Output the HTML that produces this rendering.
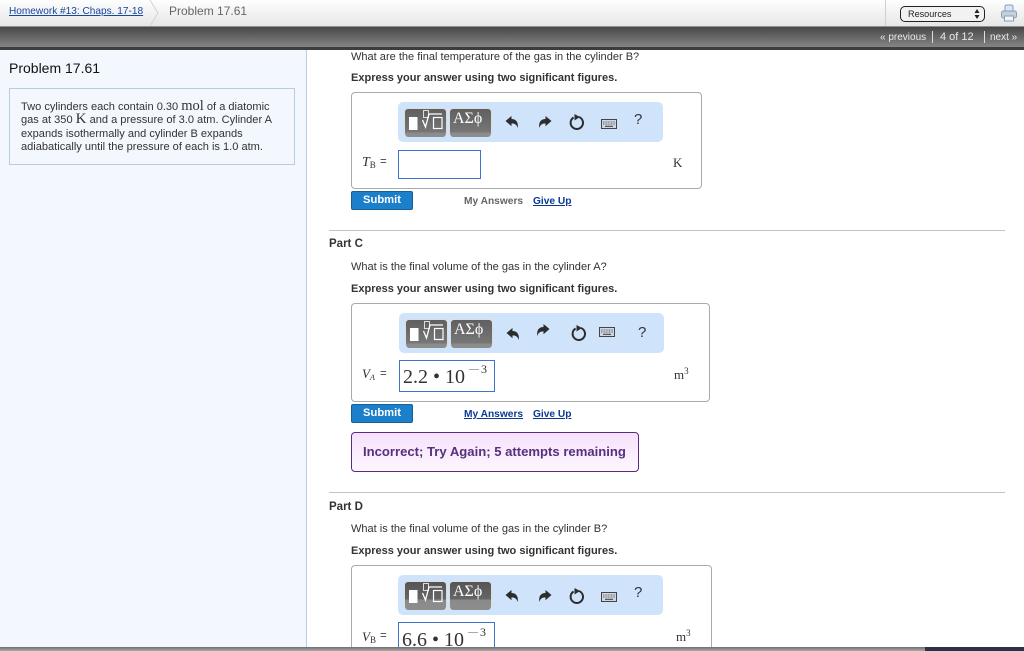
<!DOCTYPE html>
<html><head><meta charset="utf-8"><style>
html,body{margin:0;padding:0;width:1024px;height:651px;overflow:hidden;background:#fff}
body{position:relative;font-family:"Liberation Sans",sans-serif;color:#333}
.a{position:absolute;white-space:nowrap}
.t{font-size:11.040px;line-height:14px;color:#333}
.b{font-size:11.020px;line-height:14px;font-weight:bold;color:#333}
.l{font-size:10.200px;line-height:14px;font-weight:bold;color:#333}
.h{font-size:11.500px;line-height:14px;font-weight:bold;color:#333}
a{color:#0b3a94;text-decoration:underline}
.box{position:absolute;border:1px solid #aaa;border-radius:4px;background:#fff;box-sizing:border-box}
.tb{position:absolute;width:265px;height:40px;background:#cfe4fb;border-radius:5px}
.btn{position:absolute;top:6px;width:43px;height:29px;box-sizing:border-box;border-radius:4px;border:1px solid #ddd;border-bottom:0;background:linear-gradient(#5f5f5f 0,#777 83%,#8a8a8a 84%,#8d8d8d 100%);color:#fff;overflow:hidden}
.low{background:linear-gradient(#555 0,#666 62%,#8a8a8a 63%,#8d8d8d 100%)}
.sym{position:absolute;left:3px;top:1px;font-family:"Liberation Serif",serif;font-size:16px;line-height:18px}
.q{position:absolute;font-size:15px;line-height:16px;color:#333}
.sub{position:absolute;width:62px;height:19px;box-sizing:border-box;background:#1b7fc9;border:1px solid #14609c;border-radius:2px;color:#fff;font:bold 11.200px/17px "Liberation Sans",sans-serif;text-align:center}
.s{font-family:"Liberation Serif",serif}
.hr{position:absolute;left:329px;width:676px;height:1px;background:#c4c4c4}
.ans{position:absolute;box-sizing:border-box;border:1px solid #3f73c9;background:#fff;overflow:hidden}
.eq{font-family:"Liberation Sans",sans-serif;font-size:11.500px;line-height:15px;color:#444}
.dash{position:absolute;width:10px;height:1px;background:#aaa}
</style></head><body>

<svg width="0" height="0" style="position:absolute">
<defs>
<symbol id="undo" viewBox="0 0 14 14"><path d="M.5 6 L6.500 1 V4 C10.800 4 13.500 6.800 12.800 13 C11.600 9.800 10 8.400 6.500 8.400 V11.200 Z" fill="#2d2d2d"/></symbol>
<symbol id="redo" viewBox="0 0 14 14"><path d="M13.500 6 L7.500 1 V4 C3.200 4 .5 6.800 1.200 13 C2.400 9.800 4 8.400 7.500 8.400 V11.200 Z" fill="#2d2d2d"/></symbol>
<symbol id="reset" viewBox="0 0 16 16"><path d="M10 3 A6.200 6.200 0 1 1 4.600 3.500" fill="none" stroke="#2d2d2d" stroke-width="2"/><path d="M5.500 0 L11 3 L5.500 6.500 Z" fill="#2d2d2d"/></symbol>
<symbol id="kbd" viewBox="0 0 16 10"><rect x=".5" y=".5" width="15" height="9" fill="#cfd8e2" stroke="#444"/><path d="M2 3H14M2 5H14" stroke="#666" stroke-width="1" stroke-dasharray="1 .6"/><path d="M4 7.300H12" stroke="#444" stroke-width="1.100"/></symbol>
<symbol id="tpl" viewBox="0 0 42 29"><rect x="4" y="8" width="8.500" height="13" fill="#fff"/><rect x="18.500" y="1.500" width="5" height="7" fill="none" stroke="#ddd" stroke-width="1"/><path d="M17.500 11 L20.500 18 L24 5 H37" fill="none" stroke="#fff" stroke-width="1.300"/><rect x="28.500" y="8.500" width="8.500" height="11" fill="none" stroke="#fff" stroke-width="1.200"/></symbol>
</defs></svg>

<!-- top bar -->
<div class="a" style="left:0;top:0;width:1024px;height:26px;background:linear-gradient(#fefefe,#e6e6e6);border-bottom:1px solid #8f8f8f"></div>
<a class="a" style="left:9px;top:5px;font-size:10.100px;line-height:13px;color:#1546a0">Homework #13: Chaps. 17-18</a>
<svg class="a" style="left:149px;top:0" width="12" height="26"><path d="M1 0 L9 13 L1 26" fill="none" stroke="#d4d4d4"/></svg>
<div class="a" style="left:169px;top:4px;font-size:12px;line-height:15px;color:#666">Problem 17.61</div>
<div class="a" style="left:885px;top:0;width:1px;height:26px;background:#d0d0d0"></div>
<div class="a" style="left:900px;top:6px;width:85px;height:16px;box-sizing:border-box;border:1px solid #222;border-radius:5px;background:#f2f2f2;font-size:9.100px;line-height:14px;padding-left:7px;color:#222">Resources</div>
<svg class="a" style="left:974px;top:9px" width="6" height="10"><path d="M3 0L5.500 4H.5ZM3 10L5.500 6H.5Z" fill="#222"/></svg>
<svg class="a" style="left:1001px;top:4px" width="16" height="18"><path d="M4 7V2.500Q4 1 5.500 1H10.500Q12 1 12 2.500V7" fill="#dbe6f2" stroke="#7fa3c9"/><rect x=".5" y="7" width="15" height="7" rx="2" fill="#c5d0dc" stroke="#8a9db3"/><rect x="3.500" y="12" width="9" height="5" fill="#f5f5f5" stroke="#8a9db3"/></svg>

<!-- dark bar -->
<div class="a" style="left:0;top:27px;width:1024px;height:20px;background:linear-gradient(#474747,#858585)"></div>
<div class="a" style="left:0;top:47px;width:1024px;height:3px;background:#3d3d3d"></div>
<div class="a" style="left:880px;top:31px;font-size:10px;line-height:13px;color:#e8e8e8">« previous</div>
<div class="a" style="left:932px;top:31px;width:1px;height:12px;background:#ddd"></div>
<div class="a" style="left:940px;top:30px;font-size:11px;line-height:14px;color:#e8e8e8">4 of 12</div>
<div class="a" style="left:984px;top:31px;width:1px;height:12px;background:#ddd"></div>
<div class="a" style="left:990px;top:31px;font-size:10px;line-height:13px;color:#e8e8e8">next »</div>

<!-- left panel -->
<div class="a" style="left:0;top:50px;width:306px;height:597px;background:#f3f8fe;border-right:1px solid #b8cde0"></div>
<div class="a" style="left:9px;top:60px;font-size:14px;line-height:17px;color:#111">Problem 17.61</div>
<div class="a" style="left:9px;top:88px;width:286px;height:77px;box-sizing:border-box;border:1px solid #b6cee0"></div>
<div class="a" style="left:21px;top:101px;font-size:11.060px;line-height:13.300px;color:#333">Two cylinders each contain 0.30 <span class="s" style="font-size:14.500px;line-height:0">mol</span> of a diatomic<br>gas at 350 <span class="s" style="font-size:15px;line-height:0">K</span> and a pressure of 3.0 atm. Cylinder A<br>expands isothermally and cylinder B expands<br>adiabatically until the pressure of each is 1.0 atm.</div>

<!-- Part B remainder -->
<div class="a t" style="left:351px;top:50px">What are the final temperature of the gas in the cylinder B?</div>
<div class="a b" style="left:351px;top:71px">Express your answer using two significant figures.</div>

<div class="box" style="left:351px;top:92px;width:351px;height:97px"></div>
<div class="tb" style="left:398px;top:102px">
 <div class="btn" style="left:6px"><svg style="position:absolute;left:0;top:0" width="42" height="29"><use href="#tpl"/></svg></div>
 <div class="btn" style="left:51px"><div class="sym">ΑΣϕ</div></div>
 <svg class="a" style="left:107px;top:13px" width="14" height="14"><use href="#undo"/></svg>
 <svg class="a" style="left:140px;top:13px" width="14" height="14"><use href="#redo"/></svg>
 <svg class="a" style="left:171px;top:12px" width="16" height="16"><use href="#reset"/></svg>
 <svg class="a" style="left:203px;top:17px" width="16" height="10"><use href="#kbd"/></svg>
 <div class="q" style="left:236px;top:10px">?</div>
</div>
<div class="a s" style="left:362px;top:155px;font-size:14px;line-height:15px;color:#333"><i>T</i><span style="font-size:9px;position:relative;top:2px">B</span></div>
<div class="a eq" style="left:380px;top:155px">=</div>
<div class="ans" style="left:398px;top:150px;width:83px;height:29px"></div>
<div class="a s" style="left:673px;top:155px;font-size:13px;line-height:15px;color:#333">K</div>
<div class="sub" style="left:351px;top:191px">Submit</div>
<div class="a l" style="left:464px;top:195px;color:#666">My Answers</div>
<a class="a l" style="left:533px;top:195px;color:#0b3a94">Give Up</a>

<!-- Part C -->
<div class="hr" style="top:230px"></div>
<div class="a h" style="left:329px;top:237px">Part C</div>
<div class="a t" style="left:351px;top:260px">What is the final volume of the gas in the cylinder A?</div>
<div class="a b" style="left:351px;top:282px">Express your answer using two significant figures.</div>

<div class="box" style="left:351px;top:303px;width:359px;height:99px"></div>
<div class="tb" style="left:399px;top:313px">
 <div class="btn" style="left:6px"><svg style="position:absolute;left:0;top:0" width="42" height="29"><use href="#tpl"/></svg></div>
 <div class="btn" style="left:51px"><div class="sym">ΑΣϕ</div></div>
 <svg class="a" style="left:107px;top:14px" width="14" height="14"><use href="#undo"/></svg>
 <svg class="a" style="left:137px;top:10px" width="14" height="14"><use href="#redo"/></svg>
 <svg class="a" style="left:172px;top:12px" width="16" height="16"><use href="#reset"/></svg>
 <svg class="a" style="left:200px;top:14px" width="16" height="10"><use href="#kbd"/></svg>
 <div class="q" style="left:239px;top:12px">?</div>
</div>
<div class="a s" style="left:362px;top:366px;font-size:13px;line-height:15px;color:#333"><i>V</i><span style="font-size:8px;position:relative;top:2px"><i>A</i></span></div>
<div class="a eq" style="left:380px;top:367px">=</div>
<div class="ans" style="left:399px;top:360px;width:96px;height:32px"></div>
<div class="a s" style="left:403px;top:366px;font-size:20px;line-height:22px;color:#333">2.2 • 10</div>
<div class="dash" style="left:469px;top:369px"></div>
<div class="a s" style="left:481px;top:362px;font-size:12px;line-height:14px;color:#333">3</div>
<div class="a s" style="left:674px;top:367px;font-size:13px;line-height:15px;color:#333">m<span style="font-size:9px;position:relative;top:-5px">3</span></div>
<div class="sub" style="left:351px;top:404px">Submit</div>
<a class="a l" style="left:464px;top:408px;color:#0b3a94">My Answers</a>
<a class="a l" style="left:533px;top:408px;color:#0b3a94">Give Up</a>

<div class="a" style="left:351px;top:432px;width:288px;height:40px;box-sizing:border-box;border:1px solid #5d2a82;border-radius:4px;background:linear-gradient(#f6e2fb,#fdf6ff);color:#55307c;font:bold 13.100px/37px 'Liberation Sans',sans-serif;padding-left:11px">Incorrect; Try Again; 5 attempts remaining</div>

<!-- Part D -->
<div class="hr" style="top:492px"></div>
<div class="a h" style="left:329px;top:500px">Part D</div>
<div class="a t" style="left:351px;top:522px">What is the final volume of the gas in the cylinder B?</div>
<div class="a b" style="left:351px;top:544px">Express your answer using two significant figures.</div>

<div class="box" style="left:351px;top:565px;width:361px;height:110px"></div>
<div class="tb" style="left:398px;top:575px">
 <div class="btn low" style="left:6px;top:6px"><svg style="position:absolute;left:0;top:0" width="42" height="29"><use href="#tpl"/></svg></div>
 <div class="btn low" style="left:51px;top:6px"><div class="sym">ΑΣϕ</div></div>
 <svg class="a" style="left:107px;top:14px" width="14" height="14"><use href="#undo"/></svg>
 <svg class="a" style="left:140px;top:14px" width="14" height="14"><use href="#redo"/></svg>
 <svg class="a" style="left:171px;top:13px" width="16" height="16"><use href="#reset"/></svg>
 <svg class="a" style="left:203px;top:17px" width="16" height="10"><use href="#kbd"/></svg>
 <div class="q" style="left:236px;top:10px">?</div>
</div>
<div class="a s" style="left:362px;top:629px;font-size:13px;line-height:15px;color:#333"><i>V</i><span style="font-size:9px;position:relative;top:2px">B</span></div>
<div class="a eq" style="left:380px;top:629px">=</div>
<div class="ans" style="left:398px;top:622px;width:97px;height:40px"></div>
<div class="a s" style="left:402px;top:629px;font-size:20px;line-height:22px;color:#333">6.6 • 10</div>
<div class="dash" style="left:468px;top:632px"></div>
<div class="a s" style="left:480px;top:625px;font-size:12px;line-height:14px;color:#333">3</div>
<div class="a s" style="left:676px;top:629px;font-size:13px;line-height:15px;color:#333">m<span style="font-size:9px;position:relative;top:-5px">3</span></div>

<!-- bottom edge -->
<div class="a" style="left:0;top:647px;width:1024px;height:4px;background:linear-gradient(#6f6f6f,#aaa)"></div>
<div class="a" style="left:925px;top:647px;width:99px;height:4px;background:#2a3345"></div>
</body></html>
